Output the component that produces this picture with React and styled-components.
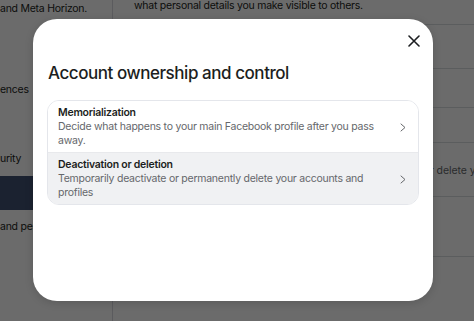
import React from 'react';
import styled, { createGlobalStyle } from 'styled-components';

const GlobalStyle = createGlobalStyle`
  html, body {
    margin: 0;
    padding: 0;
    background: #fff;
  }
  body {
    font-family: Inter, "Open Sans", Arial, sans-serif;
    -webkit-font-smoothing: antialiased;
  }
`;

const Page = styled.div`
  position: relative;
  width: 474px;
  height: 321px;
  overflow: hidden;
  display: grid;
  grid-template-columns: 113px 1fr;
  background: #fff;
  color: #1c1e21;
  font-size: 10.5px;
  letter-spacing: -0.25px;
`;

const Sidebar = styled.div`
  border-right: 1px solid #d8dadf;
  display: flex;
  flex-direction: column;
`;

const SideItem = styled.div`
  height: ${p => p.$h}px;
  flex-shrink: 0;
  display: flex;
  align-items: center;
  line-height: 14px;
  background: ${p => (p.$active ? '#405172' : 'transparent')};
  white-space: nowrap;
`;

const Main = styled.div`
  display: flex;
  flex-direction: column;
  padding-left: 21px;
`;

const MainRow = styled.div`
  height: ${p => p.$h}px;
  flex-shrink: 0;
  box-sizing: border-box;
  border-bottom: 1px solid #dadde1;
  display: flex;
  flex-direction: column;
  padding-top: ${p => p.$pad || 0}px;
  white-space: nowrap;
  line-height: ${p => p.$lh || 13}px;
`;

const MainTitle = styled.div`
  font-weight: 600;
`;

const MainDesc = styled.div`
  color: #65676b;
  letter-spacing: -0.04px;
`;

const Overlay = styled.div`
  position: absolute;
  inset: 0;
  background: rgba(0, 0, 0, 0.58);
  padding: 19px 0 0 33px;
`;

const Modal = styled.div`
  width: 400px;
  height: 282px;
  box-sizing: border-box;
  background: #fff;
  border-radius: 24px;
  padding: 14px 14px 0 14px;
  display: flex;
  flex-direction: column;
  box-shadow: 0 2px 8px rgba(0, 0, 0, 0.15);
`;

const Header = styled.div`
  display: flex;
  justify-content: flex-end;
`;

const CloseButton = styled.button`
  width: 16px;
  height: 16px;
  border: none;
  background: none;
  padding: 0;
  margin-right: -3px;
  display: flex;
  align-items: center;
  justify-content: center;
  cursor: pointer;
`;

const Title = styled.h2`
  margin: 13px 0 0 1px;
  font-size: 17px;
  font-weight: 500;
  letter-spacing: -0.45px;
  color: #1c1e21;
  line-height: 22px;
`;

const Card = styled.div`
  margin-top: 16px;
  border: 1px solid #e4e6eb;
  border-radius: 12px;
  overflow: hidden;
`;

const Row = styled.div`
  display: flex;
  align-items: center;
  gap: 12px;
  padding: 5px 12px 4px 10px;
  background: ${p => (p.$shaded ? '#f0f1f3' : '#fff')};
  border-top: ${p => (p.$shaded ? '1px solid #e8e9ec' : 'none')};
  cursor: pointer;
`;

const RowText = styled.div`
  flex: 1;
  display: flex;
  flex-direction: column;
`;

const RowTitle = styled.div`
  font-size: 10.5px;
  font-weight: 600;
  color: #1c1e21;
  line-height: 14px;
`;

const RowDesc = styled.div`
  font-size: 10.5px;
  color: #65676b;
  line-height: 14px;
`;

const Chevron = () => (
  <svg width="6" height="9" viewBox="0 0 6 9" fill="none">
    <polyline points="1,1 5,4.5 1,8" stroke="#65676b" strokeWidth="1" strokeLinecap="round" strokeLinejoin="round" />
  </svg>
);

const CloseIcon = () => (
  <svg width="12" height="12" viewBox="0 0 12 12">
    <path d="M1 1 L11 11 M11 1 L1 11" stroke="#1c1e21" strokeWidth="1.6" strokeLinecap="round" />
  </svg>
);

const options = [
  {
    title: 'Memorialization',
    desc: 'Decide what happens to your main Facebook profile after you pass away.',
  },
  {
    title: 'Deactivation or deletion',
    desc: 'Temporarily deactivate or permanently delete your accounts and profiles',
  },
];

export default function App() {
  return (
    <>
      <GlobalStyle />
      <Page>
        <Sidebar>
          <SideItem $h={17}>and Meta Horizon.</SideItem>
          <SideItem $h={59}></SideItem>
          <SideItem $h={28}>ences</SideItem>
          <SideItem $h={38}></SideItem>
          <SideItem $h={34}>urity</SideItem>
          <SideItem $h={34} $active></SideItem>
          <SideItem $h={34}>and per</SideItem>
        </Sidebar>
        <Main>
          <MainRow $h={25} $lh={11}>what personal details you make visible to others.</MainRow>
          <MainRow $h={44}></MainRow>
          <MainRow $h={39}></MainRow>
          <MainRow $h={35}></MainRow>
          <MainRow $h={54} $pad={8}>
            <MainTitle>Account ownership and control</MainTitle>
            <MainDesc>Manage your data, modify your legacy contact, deactivate or delete your accounts and profiles.</MainDesc>
          </MainRow>
          <MainRow $h={60}></MainRow>
        </Main>
        <Overlay>
          <Modal>
            <Header>
              <CloseButton aria-label="Close">
                <CloseIcon />
              </CloseButton>
            </Header>
            <Title>Account ownership and control</Title>
            <Card>
              {options.map((o, i) => (
                <Row key={o.title} $shaded={i === 1}>
                  <RowText>
                    <RowTitle>{o.title}</RowTitle>
                    <RowDesc>{o.desc}</RowDesc>
                  </RowText>
                  <Chevron />
                </Row>
              ))}
            </Card>
          </Modal>
        </Overlay>
      </Page>
    </>
  );
}
